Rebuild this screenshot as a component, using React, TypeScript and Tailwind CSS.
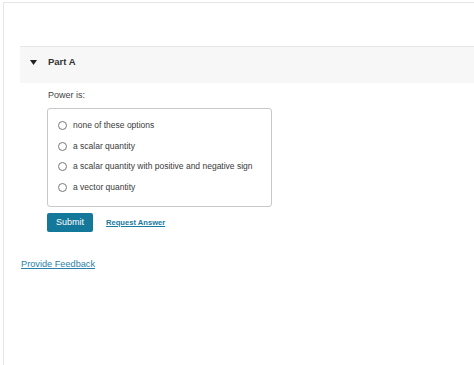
const options = [
  "none of these options",
  "a scalar quantity",
  "a scalar quantity with positive and negative sign",
  "a vector quantity",
];

export default function App() {
  return (
    <div className="h-[365px] w-[474px] overflow-hidden bg-white pl-[3px] pt-[2px] font-['Liberation_Sans',Arial,sans-serif]">
      <div className="h-full border-l border-t border-[#e4e6ea] pt-[43px]">
        <section className="ml-[16px]">
          <div className="flex h-[37px] items-start border-t border-[#e8e8e8] bg-[#f7f7f7] pl-[10px] pt-[8px]">
            <svg width="7" height="5" viewBox="0 0 7 5" className="mr-[11px] mt-[5px]">
              <path d="M0 0h7L3.5 5z" fill="#222" />
            </svg>
            <span className="text-[9.5px] leading-[14px] font-bold text-[#333]">Part A</span>
          </div>
          <div className="pl-[27px] pt-[6px]">
            <p className="pl-[1px] text-[9px] leading-[12px] text-[#444]">Power is:</p>
            <div className="mt-[7px] w-[225px] rounded-[3px] border border-[#c8c8c8] px-[10px] pb-[8px] pt-[6px]">
              {options.map((o) => (
                <label key={o} className="flex h-[20.7px] items-center gap-[6px] whitespace-nowrap text-[8.5px] text-[#3a3a3a]">
                  <span className="h-[9px] w-[9px] shrink-0 rounded-full border border-[#777]" />
                  {o}
                </label>
              ))}
            </div>
            <div className="mt-[6px] flex items-center gap-[13px]">
              <button className="h-[19px] w-[46px] rounded-[2px] bg-[#14789a] text-[9px] text-white">
                Submit
              </button>
              <a href="#" className="text-[7.6px] font-bold text-[#1a7a9e] underline">
                Request Answer
              </a>
            </div>
          </div>
        </section>
        <a href="#" className="ml-[17px] mt-[26px] inline-block text-[9.2px] text-[#2a7fa8] underline">
          Provide Feedback
        </a>
      </div>
    </div>
  );
}
